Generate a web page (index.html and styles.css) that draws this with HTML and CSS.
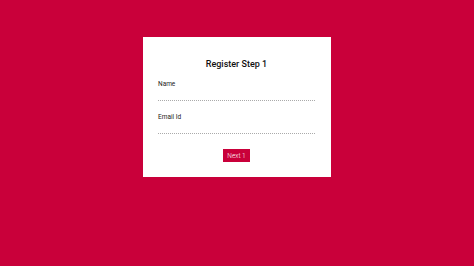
FILE: index.html
```html
<!DOCTYPE html>
<html lang="en">
<head>
    <meta charset="UTF-8">
    <meta name="viewport" content="width=device-width, initial-scale=1.0">
    <title>Register Step 1</title>
    <link rel="stylesheet" href="styles.css">
</head>
<body>
    <div class="page">
        <form class="register-card">
            <h2>Register Step 1</h2>
            <label for="name">Name</label>
            <input type="text" id="name">
            <label for="email" class="second">Email Id</label>
            <input type="email" id="email">
            <div class="actions">
                <button type="button">Next 1</button>
            </div>
        </form>
    </div>
</body>
</html>
```

FILE: styles.css
```css
body {
    font-family: Roboto, "Liberation Sans", sans-serif;
    background-color: #c9003a;
    margin: 0;
    padding: 0;
}
.page {
    display: flex;
    justify-content: center;
    padding-top: 37px;
}
.register-card {
    background-color: #ffffff;
    width: 188px;
    box-sizing: border-box;
    padding: 22px 16px 15px 15px;
    display: flex;
    flex-direction: column;
}
h2 {
    text-align: center;
    font-size: 9px;
    line-height: 11px;
    font-weight: 500;
    color: #111;
    margin: 0 0 10px 0;
}
label {
    font-size: 6.5px;
    line-height: 8px;
    color: #222;
}
label.second {
    margin-top: 12px;
}
input {
    border: none;
    border-bottom: 1px dotted #aaa;
    height: 13px;
    box-sizing: border-box;
    padding: 0;
    outline: none;
    font-size: 7px;
}
.actions {
    display: flex;
    justify-content: center;
    margin-top: 15px;
}
.actions button {
    background-color: #c9003a;
    color: #ffffff;
    border: none;
    font-family: inherit;
    font-size: 6.5px;
    font-weight: 300;
    height: 13px;
    width: 27px;
    padding: 0;
    cursor: pointer;
}
```
